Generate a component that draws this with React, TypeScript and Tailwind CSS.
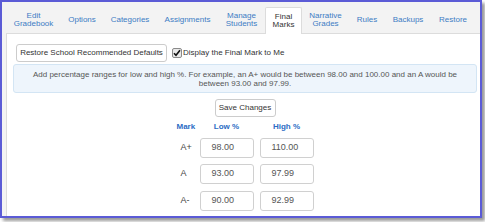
import React from 'react';

const tabs = [
  { label: ['Edit', 'Gradebook'], w: 'w-[55px]' },
  { label: ['Options'], w: 'w-[42px]' },
  { label: ['Categories'], w: 'w-[54px]' },
  { label: ['Assignments'], w: 'w-[61px]' },
  { label: ['Manage', 'Students'], w: 'w-[47px]' },
  { label: ['Final', 'Marks'], w: 'w-[37px]', active: true },
  { label: ['Narrative', 'Grades'], w: 'w-[47px]' },
  { label: ['Rules'], w: 'w-[36px]' },
  { label: ['Backups'], w: 'w-[46px]' },
  { label: ['Restore'], w: 'w-[44px]' },
];

// last row is mostly hidden under the frame edge, so its values are left blank
const marks = [
  { mark: 'A+', low: '98.00', high: '110.00' },
  { mark: 'A', low: '93.00', high: '97.99' },
  { mark: 'A-', low: '90.00', high: '92.99' },
  { mark: '', low: '', high: '' },
];

export default function App() {
  return (
    <div className="w-[485px] h-[222px] bg-white overflow-hidden font-['Liberation_Sans',Arial,sans-serif]">
      <div className="w-[482px] h-[218px] border-2 border-[#5b5bd6] bg-[#f3f3f3] shadow-[3px_3px_3px_rgba(0,0,0,0.4)] overflow-hidden flex flex-col">
        {/* Tabs */}
        <div className="h-[31px] flex items-end pl-[4px] shrink-0">
          {tabs.map((t, i) => (
            <div
              key={i}
              className={
                t.active
                  ? `${t.w} h-[27px] -mb-px relative z-10 bg-white border border-b-0 border-[#dcdcdc] rounded-t-[2px] flex flex-col items-center justify-center text-[8px] leading-[8.5px] text-[#333] text-center`
                  : `${t.w} h-[26px] flex flex-col items-center justify-center text-[8px] leading-[8.5px] text-[#3d7cc4] text-center`
              }
            >
              {t.label.map((l) => (
                <span key={l} className="whitespace-nowrap">{l}</span>
              ))}
            </div>
          ))}
        </div>

        {/* Panel */}
        <div className="flex-1 ml-[4px] w-[500px] bg-white border-l border-t border-[#dcdcdc] pl-[6px] pt-[10px]">
          <div className="flex items-center">
            <button className="ml-[3px] w-[151px] h-[18px] border border-[#cccccc] rounded-[3px] bg-white text-[8px] text-[#333] whitespace-nowrap">
              Restore School Recommended Defaults
            </button>
            <div className="ml-[5px] w-[10px] h-[10px] border border-[#8a8a8a] bg-[#e9e9e9] rounded-[2px] flex items-center justify-center">
              <svg width="8" height="8" viewBox="0 0 8 8">
                <path d="M1 4.2 L3 6.3 L7 1.3" stroke="#111" strokeWidth="1.6" fill="none" />
              </svg>
            </div>
            <span className="ml-px text-[8px] text-[#333] whitespace-nowrap">Display the Final Mark to Me</span>
          </div>

          <div className="w-[464px] flex flex-col items-center">
            <div className="mt-[2px] w-[464px] h-[29px] bg-[#eef5fc] border border-[#d3e5f4] rounded-[3px] flex items-center justify-center text-center text-[8px] leading-[9px] text-[#555] whitespace-nowrap">
              <p>
                Add percentage ranges for low and high %. For example, an A+ would be between 98.00 and 100.00 and an A would be
                <br />
                between 93.00 and 97.99.
              </p>
            </div>

            <button className="mt-[6px] w-[61px] h-[18px] border border-[#cccccc] rounded-[3px] bg-white text-[8px] text-[#333] whitespace-nowrap">
              Save Changes
            </button>

            <div className="mt-[5px] flex flex-col gap-[6.5px]">
              <div className="flex h-[9px] items-center text-[8px] font-bold text-[#2c6cc4] leading-[9px]">
                <span className="w-[23px]">Mark</span>
                <span className="w-[54px] text-center">Low %</span>
                <span className="w-[54px] ml-[6px] text-center">High %</span>
              </div>
              {marks.map((m, i) => (
                <div key={i} className="flex items-center h-[20px]">
                  <span className="w-[23px] pl-[4px] text-[9px] text-[#444]">{m.mark}</span>
                  <div className="w-[54px] h-[20px] border border-[#d0d0d0] rounded-[3px] pl-[11px] flex items-center text-[9px] text-[#555]">
                    {m.low}
                  </div>
                  <div className="w-[54px] h-[20px] ml-[6px] border border-[#d0d0d0] rounded-[3px] pl-[11px] flex items-center text-[9px] text-[#555]">
                    {m.high}
                  </div>
                </div>
              ))}
            </div>
          </div>
        </div>
      </div>
    </div>
  );
}
